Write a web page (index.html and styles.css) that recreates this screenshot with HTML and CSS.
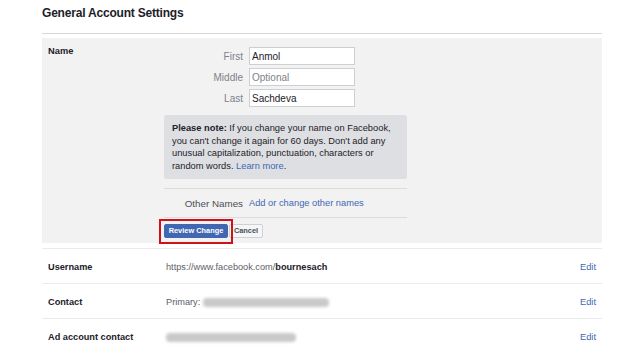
FILE: index.html
```html
<!DOCTYPE html>
<html lang="en">
<head>
  <meta charset="UTF-8" />
  <title>General Account Settings</title>
  <link rel="stylesheet" href="styles.css">
</head>
<body>
  <div class="page">
    <h1 class="title">General Account Settings</h1>

    <div class="panel">
      <div class="panel-label">Name</div>
      <div class="panel-body">
        <div class="name-form">
          <label class="field-label" for="first">First</label>
          <input class="field" id="first" type="text" value="Anmol">
          <label class="field-label" for="middle">Middle</label>
          <input class="field" id="middle" type="text" placeholder="Optional">
          <label class="field-label" for="last">Last</label>
          <input class="field" id="last" type="text" value="Sachdeva">
        </div>

        <p class="note"><b>Please note:</b> If you change your name on Facebook, you can't change it again for 60 days. Don't add any unusual capitalization, punctuation, characters or random words. <a href="#" class="link">Learn more</a>.</p>

        <div class="other-names">
          <span class="other-label">Other Names</span>
          <a href="#" class="link">Add or change other names</a>
        </div>

        <div class="actions">
          <span class="highlight">
            <button class="btn btn-primary">Review Change</button>
          </span>
          <button class="btn btn-plain">Cancel</button>
        </div>
      </div>
    </div>

    <div class="settings">
      <div class="setting-row">
        <div class="row-label">Username</div>
        <div class="row-value">https://www.facebook.com/<b>bournesach</b></div>
        <a href="#" class="link edit">Edit</a>
      </div>
      <div class="setting-row">
        <div class="row-label">Contact</div>
        <div class="row-value">Primary: <span class="redacted redacted-long"></span></div>
        <a href="#" class="link edit">Edit</a>
      </div>
      <div class="setting-row">
        <div class="row-label">Ad account contact</div>
        <div class="row-value"><span class="redacted redacted-short"></span></div>
        <a href="#" class="link edit">Edit</a>
      </div>
    </div>
  </div>
</body>
</html>
```

FILE: styles.css
```css
:root {
  --text: #1d2129;
  --muted: #7d8188;
  --grey-text: #5d6168;
  --link: #4267b2;
  --panel: #f2f2f2;
  --note: #dddfe2;
}

body {
  margin: 0;
  background: #fff;
  color: var(--text);
  font-family: 'Liberation Sans', Arial, sans-serif;
}

.page {
  width: 560px;
  margin-left: 42px;
}

.title {
  margin: 0;
  padding: 6px 0 13px;
  font-size: 12px;
  line-height: 14px;
  font-weight: 700;
  letter-spacing: -0.2px;
  border-bottom: 1px solid #d8d8d8;
}

.panel {
  display: flex;
  align-items: flex-start;
  margin-top: 4px;
  padding: 0 6px 5px;
  background: var(--panel);
}

.panel-label {
  width: 116px;
  padding-top: 7px;
  font-size: 9.3px;
  line-height: 12px;
  font-weight: 700;
}

.panel-body {
  width: 243px;
  padding-top: 9px;
}

.name-form {
  display: grid;
  grid-template-columns: 79px 106px;
  grid-auto-rows: 18px;
  column-gap: 6px;
  row-gap: 3px;
  align-items: center;
}

.field-label {
  text-align: right;
  font-size: 10px;
  color: var(--muted);
}

.field {
  box-sizing: border-box;
  width: 106px;
  height: 18px;
  margin: 0;
  padding: 0 2px;
  border: 1px solid #ccd0d5;
  background: #fff;
  font-family: inherit;
  font-size: 10px;
  color: var(--text);
  outline: none;
}

.field::placeholder {
  color: var(--muted);
}

.note {
  margin: 8px 0 0;
  padding: 7px 8px;
  background: var(--note);
  border-radius: 2px;
  font-size: 9.3px;
  line-height: 12.5px;
}

.link {
  color: var(--link);
  text-decoration: none;
}

.other-names {
  display: grid;
  grid-template-columns: 79px auto;
  column-gap: 6px;
  align-items: center;
  height: 28px;
  margin-top: 9px;
  border-top: 1px solid #dcdcdc;
  border-bottom: 1px solid #dcdcdc;
  font-size: 9.3px;
}

.other-label {
  text-align: right;
  font-size: 9.8px;
  color: #4b4f56;
}

.actions {
  display: flex;
  align-items: center;
  gap: 1px;
  margin-top: 6px;
}

.highlight {
  position: relative;
  display: flex;
}

.highlight::after {
  content: "";
  position: absolute;
  top: -5px;
  left: -5px;
  right: -5px;
  bottom: -6px;
  border: 2px solid #d0101b;
}

.btn {
  height: 14px;
  margin: 0;
  padding: 0;
  font-family: inherit;
  font-size: 7.4px;
  font-weight: 700;
  line-height: 12px;
  white-space: nowrap;
  border-radius: 2px;
  cursor: pointer;
}

.btn-primary {
  width: 64px;
  background: #4267b2;
  border: 1px solid #4267b2;
  color: #fff;
}

.btn-plain {
  width: 34px;
  background: #f5f6f7;
  border: 1px solid #ced0d4;
  color: #4b4f56;
}

.settings {
  margin-top: 5px;
}

.setting-row {
  display: flex;
  align-items: center;
  box-sizing: border-box;
  height: 35px;
  padding: 2px 6px 0;
  border-top: 1px solid #e9ebee;
  font-size: 9.2px;
}

.row-label {
  width: 118px;
  font-weight: 700;
}

.row-value {
  flex: 1;
  display: flex;
  align-items: center;
  color: var(--grey-text);
  white-space: pre;
}

.row-value b {
  color: var(--text);
}

.redacted {
  display: inline-block;
  height: 9px;
  background: #c9c9c9;
  border-radius: 4px;
  filter: blur(1.5px);
}

.redacted-long {
  width: 126px;
}

.redacted-short {
  width: 130px;
}

.edit {
  font-size: 9.3px;
}
```
